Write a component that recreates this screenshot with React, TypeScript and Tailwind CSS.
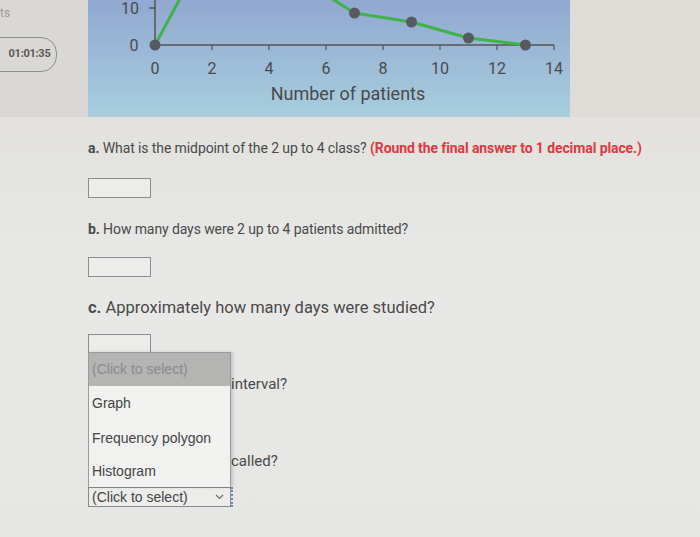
import React from "react";

const ticks = [0, 2, 4, 6, 8, 10, 12, 14];
const X0 = 67;
const STEP = 28.5;

// points of the frequency polygon, in panel pixels (some lie above the top edge)
const points: [number, number][] = [
  [0, 45],
  [1, -8],
  [3, -30],
  [5, -23],
  [7, 13],
  [9, 22],
  [11, 38],
  [13, 45],
];

function Chart() {
  const pts = points.map(([k, y]) => [X0 + k * STEP, y] as [number, number]);
  return (
    <svg width="482" height="117" className="block overflow-hidden">
      {/* y axis */}
      <line x1={X0} y1={-5} x2={X0} y2={45} stroke="#555" strokeWidth="1.5" />
      <line x1={X0 - 6} y1={8} x2={X0} y2={8} stroke="#555" strokeWidth="1.5" />
      <line x1={14} y1={-2} x2={22} y2={-2} stroke="#555" strokeWidth="2" />
      <text x={42} y={14} fontSize="16" fill="#4a4a4a" textAnchor="middle" fontFamily="Roboto, sans-serif">10</text>
      <text x={46} y={51} fontSize="16" fill="#4a4a4a" textAnchor="middle" fontFamily="Roboto, sans-serif">0</text>
      {/* x axis */}
      <line x1={X0} y1={45} x2={X0 + 14 * STEP} y2={45} stroke="#555" strokeWidth="1.5" />
      {ticks.map((t) => (
        <g key={t}>
          <line x1={X0 + t * STEP} y1={45} x2={X0 + t * STEP} y2={50} stroke="#555" strokeWidth="1.2" />
          <text x={X0 + t * STEP} y={74} fontSize="16" fill="#4a4a4a" textAnchor="middle" fontFamily="Roboto, sans-serif">
            {t}
          </text>
        </g>
      ))}
      <text x={260} y={100} fontSize="18" fill="#4a4a4a" textAnchor="middle" fontFamily="Roboto, sans-serif">
        Number of patients
      </text>
      <polyline
        points={pts.map((p) => p.join(",")).join(" ")}
        fill="none"
        stroke="#3fb34a"
        strokeWidth="3"
        strokeLinejoin="round"
      />
      {pts.map(([x, y], i) => (
        <circle key={i} cx={x} cy={y} r="5.5" fill="#575b61" />
      ))}
    </svg>
  );
}

function AnswerBox() {
  return <div className="w-[63px] h-[20px] border border-[#8d8d8d] bg-[#ececea]" />;
}

export default function App() {
  return (
    <div
      className="w-[700px] h-[537px] overflow-hidden bg-gradient-to-b from-[#dedcd8] via-[#e8e8e6] to-[#e6e6e4] text-[#4a4a4a]"
      style={{ fontFamily: "Roboto, 'Liberation Sans', sans-serif" }}
    >
      {/* top row: sidebar + chart */}
      <div className="flex">
        <div className="w-[88px] shrink-0 bg-[#dad8d4] h-[117px]">
          <div className="text-[12px] leading-none text-[#9a9a98] pt-[7px]">ts</div>
          <div className="-ml-[20px] mt-[18px] w-[77px] h-[35px] rounded-[16px] border border-[#8e8e8a] flex items-center justify-center pl-[22px]">
            <span className="text-[11px] font-bold text-[#595957] tracking-tight">01:01:35</span>
          </div>
        </div>
        <div className="w-[482px] h-[117px] shrink-0 bg-gradient-to-b from-[#91a8d0] to-[#a8cede]">
          <Chart />
        </div>
        <div className="flex-1 bg-[#dfdcd7]" />
      </div>

      {/* questions */}
      <div className="pl-[88px] whitespace-nowrap">
        <div className="mt-[21px] text-[14px] leading-[20px] tracking-[-0.1px]">
          <span className="font-bold">a.</span> What is the midpoint of the 2 up to 4 class?{" "}
          <span className="font-bold text-[#e3373f]">(Round the final answer to 1 decimal place.)</span>
        </div>
        <div className="mt-[20px]">
          <AnswerBox />
        </div>
        <div className="mt-[21px] text-[14px] leading-[20px] tracking-[-0.1px]">
          <span className="font-bold">b.</span> How many days were 2 up to 4 patients admitted?
        </div>
        <div className="mt-[18px]">
          <AnswerBox />
        </div>
        <div className="mt-[21px] text-[16.5px] leading-[20px]">
          <span className="font-bold">c.</span> Approximately how many days were studied?
        </div>
        <div className="mt-[16px]">
          <div className="w-[63px] h-[19px] border border-[#8d8d8d] bg-[#ececea]" />
        </div>
        <div className="mt-[21px] pl-[143px] text-[15px] leading-[20px]">interval?</div>
        <div className="mt-[57px] pl-[143px] text-[15px] leading-[20px]">called?</div>
        <div className="mt-[16px] flex items-center">
          <div className="relative" style={{ fontFamily: "'Liberation Sans', Arial, sans-serif" }}>
            {/* open option list */}
            <div className="absolute left-0 bottom-full w-[143px] bg-[#f1f1f0] border border-[#9a9a9a] border-b-0 shadow-[2px_0_3px_rgba(0,0,0,0.15)] text-[14px] text-[#444]">
              <div className="h-[33px] bg-[#b4b4b3] text-[#8a8a8a] pl-[3px] pt-[6px]">(Click to select)</div>
              <div className="h-[35px] pl-[3px] pt-[7px]">Graph</div>
              <div className="h-[34px] pl-[3px] pt-[7px]">Frequency polygon</div>
              <div className="h-[32px] pl-[3px] pt-[6px]">Histogram</div>
            </div>
            <div className="w-[143px] h-[20px] border border-[#8a8a8a] bg-[#ececea] flex items-center justify-between pl-[3px] pr-[6px] text-[14px] text-[#444]">
              <span>(Click to select)</span>
              <svg width="9" height="6" viewBox="0 0 9 6">
                <path d="M1 1 L4.5 4.5 L8 1" fill="none" stroke="#6b6b6b" strokeWidth="1.2" />
              </svg>
            </div>
          </div>
          <div className="w-[3px] h-[20px] border-l-2 border-dotted border-[#5b8fc4]" />
        </div>
      </div>
    </div>
  );
}
